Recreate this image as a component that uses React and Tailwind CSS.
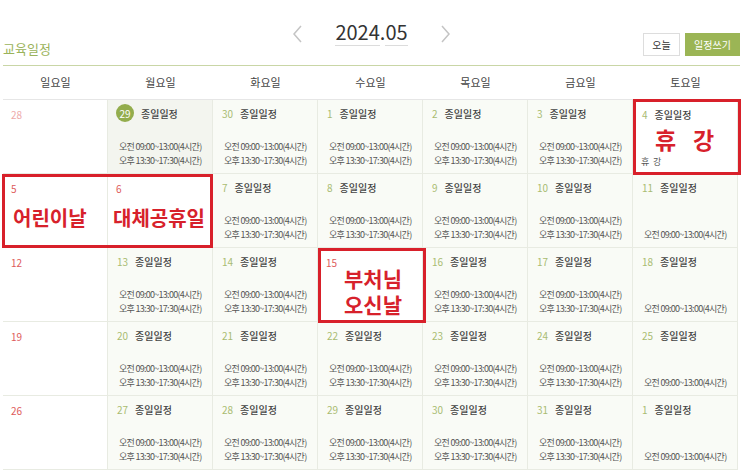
import React from 'react';

const font = { fontFamily: "'Noto Sans CJK KR', 'Noto Sans', sans-serif" };

const days = ['일요일', '월요일', '화요일', '수요일', '목요일', '금요일', '토요일'];

// type: sun | full | sat | holiday | break
const weeks = [
    [
        { n: 28, type: 'sun', faded: true },
        { n: 29, type: 'full', today: true },
        { n: 30, type: 'full' },
        { n: 1, type: 'full' },
        { n: 2, type: 'full' },
        { n: 3, type: 'full' },
        { n: 4, type: 'break' },
    ],
    [
        { n: 5, type: 'holiday', label: '어린이날', pad: 'pl-[2px] mt-[8px]' },
        { n: 6, type: 'holiday', label: '대체공휴일', pad: '-ml-[3px] mt-[8px]' },
        { n: 7, type: 'full' },
        { n: 8, type: 'full' },
        { n: 9, type: 'full' },
        { n: 10, type: 'full' },
        { n: 11, type: 'sat' },
    ],
    [
        { n: 12, type: 'sun' },
        { n: 13, type: 'full' },
        { n: 14, type: 'full' },
        { n: 15, type: 'holiday', label: '부처님\n오신날', pad: 'text-[21px] -mt-[6px] pl-[18px]' },
        { n: 16, type: 'full' },
        { n: 17, type: 'full' },
        { n: 18, type: 'sat' },
    ],
    [
        { n: 19, type: 'sun' },
        { n: 20, type: 'full' },
        { n: 21, type: 'full' },
        { n: 22, type: 'full' },
        { n: 23, type: 'full' },
        { n: 24, type: 'full' },
        { n: 25, type: 'sat' },
    ],
    [
        { n: 26, type: 'sun' },
        { n: 27, type: 'full' },
        { n: 28, type: 'full' },
        { n: 29, type: 'full' },
        { n: 30, type: 'full' },
        { n: 31, type: 'full' },
        { n: 1, type: 'sat' },
    ],
];

function DayHead({ d }) {
    return (
        <div className="flex items-center gap-[7px] h-[18px]">
            {d.today ? (
                <span className="w-[18px] h-[18px] rounded-full bg-[#93ad4c] text-white text-[10px] flex items-center justify-center">{d.n}</span>
            ) : (
                <span className="text-[10px] text-[#a9bb72] pl-[1px]">{d.n}</span>
            )}
            <span className="text-[10px] text-[#444] font-medium">종일일정</span>
        </div>
    );
}

function Times({ single }) {
    return (
        <div className="flex flex-col ml-[3px] text-[9px] leading-[14px] text-[#555] tracking-[-0.08em]">
            {single ? (
                <span>오전 09:00~13:00(4시간)</span>
            ) : (
                <>
                    <span>오전 09:00~13:00(4시간)</span>
                    <span>오후 13:30~17:30(4시간)</span>
                </>
            )}
        </div>
    );
}

function Cell({ d }) {
    const base = 'h-[74px] border-r border-b border-[#e8ebe2] flex flex-col';
    if (d.type === 'sun') {
        return (
            <div className={`${base} bg-white pl-[8px] pt-[5px]`}>
                <span className={`text-[10px] h-[18px] flex items-center ${d.faded ? 'text-[#eeaaaa]' : 'text-[#de5b5b]'}`}>{d.n}</span>
            </div>
        );
    }
    if (d.type === 'holiday') {
        return (
            <div className={`${base} bg-white pl-[8px] pt-[5px]`}>
                <span className="text-[10px] h-[18px] flex items-center text-[#de5b5b]">{d.n}</span>
                <span className={`whitespace-pre font-bold text-[20px] leading-[26px] text-[#d7212b] ${d.pad}`}>{d.label}</span>
            </div>
        );
    }
    if (d.type === 'break') {
        return (
            <div className={`${base} bg-white pl-[8px] pt-[5px]`}>
                <DayHead d={d} />
                <span className="text-[23px] leading-[33px] font-bold text-[#d7212b] pl-[14px] tracking-[0.25em]">휴 강</span>
                <span className="text-[9px] text-[#555] leading-[12px] tracking-[0.1em]">휴 강</span>
            </div>
        );
    }
    return (
        <div className={`${base} ${d.today ? 'bg-[#f3f5ef]' : 'bg-[#f9fbf6]'} pl-[8px] pt-[4px] pb-[5px] justify-between`}>
            <DayHead d={d} />
            <Times single={d.type === 'sat'} />
        </div>
    );
}

export default function App() {
    return (
        <div className="w-[743px] h-[473px] bg-white overflow-hidden relative" style={font}>
            {/* Top bar */}
            <div className="mx-[3px] w-[737px] h-[66px] grid grid-cols-[1fr_auto_1fr] border-b border-[#c9d6a6]">
                <div className="self-end pb-[7px] text-[13px] text-[#9ab35a] leading-[18px]">교육일정</div>
                <div className="flex items-start gap-[32px] pt-[19px]">
                    <svg width="12" height="20" viewBox="0 0 12 20" className="mt-[5px]">
                        <path d="M10 2 L3 10 L10 18" fill="none" stroke="#c4c4c4" strokeWidth="1.5" />
                    </svg>
                    <div className="flex text-[20px] leading-[26px] text-[#333]">
                        <span className="border-b border-[#dcdcdc]">2024</span>
                        <span>.</span>
                        <span className="border-b border-[#dcdcdc]">05</span>
                    </div>
                    <svg width="12" height="20" viewBox="0 0 12 20" className="mt-[5px]">
                        <path d="M2 2 L9 10 L2 18" fill="none" stroke="#c4c4c4" strokeWidth="1.5" />
                    </svg>
                </div>
                <div className="flex justify-end items-start gap-[5px] pt-[33px]">
                    <button className="h-[23px] w-[37px] border border-[#dddddd] bg-white text-[10px] text-[#333]">오늘</button>
                    <button className="h-[23px] w-[55px] bg-[#9bb555] text-[10px] text-white">일정쓰기</button>
                </div>
            </div>

            {/* Week day header */}
            <div className="mx-[3px] w-[735px] grid grid-cols-7 h-[34px] border-b border-[#e6e6e6]">
                {days.map(d => (
                    <div key={d} className="flex items-center justify-center text-[11px] text-[#444]">{d}</div>
                ))}
            </div>

            {/* Calendar grid */}
            <div className="mx-[3px] w-[735px] grid grid-cols-7">
                {weeks.flat().map((d, i) => (
                    <Cell key={i} d={d} />
                ))}
            </div>

            {/* Red annotation boxes */}
            <div className="absolute left-[2px] top-[174px] w-[211px] h-[74px] border-[3px] border-[#d8202a] pointer-events-none" />
            <div className="absolute left-[633px] top-[99px] w-[108px] h-[76px] border-[3px] border-[#d8202a] pointer-events-none" />
            <div className="absolute left-[318px] top-[248px] w-[108px] h-[75px] border-[3px] border-[#d8202a] pointer-events-none" />
        </div>
    );
}
